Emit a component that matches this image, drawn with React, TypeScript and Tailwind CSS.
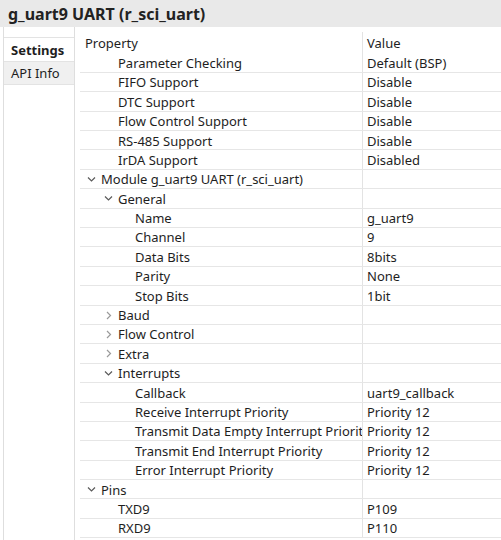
import React from 'react';

type Row = {
  label: string;
  value?: string;
  level: number;
  expander?: 'open' | 'closed';
};

const rows: Row[] = [
  { label: 'Parameter Checking', value: 'Default (BSP)', level: 1 },
  { label: 'FIFO Support', value: 'Disable', level: 1 },
  { label: 'DTC Support', value: 'Disable', level: 1 },
  { label: 'Flow Control Support', value: 'Disable', level: 1 },
  { label: 'RS-485 Support', value: 'Disable', level: 1 },
  { label: 'IrDA Support', value: 'Disabled', level: 1 },
  { label: 'Module g_uart9 UART (r_sci_uart)', level: 0, expander: 'open' },
  { label: 'General', level: 1, expander: 'open' },
  { label: 'Name', value: 'g_uart9', level: 2 },
  { label: 'Channel', value: '9', level: 2 },
  { label: 'Data Bits', value: '8bits', level: 2 },
  { label: 'Parity', value: 'None', level: 2 },
  { label: 'Stop Bits', value: '1bit', level: 2 },
  { label: 'Baud', level: 1, expander: 'closed' },
  { label: 'Flow Control', level: 1, expander: 'closed' },
  { label: 'Extra', level: 1, expander: 'closed' },
  { label: 'Interrupts', level: 1, expander: 'open' },
  { label: 'Callback', value: 'uart9_callback', level: 2 },
  { label: 'Receive Interrupt Priority', value: 'Priority 12', level: 2 },
  { label: 'Transmit Data Empty Interrupt Priority', value: 'Priority 12', level: 2 },
  { label: 'Transmit End Interrupt Priority', value: 'Priority 12', level: 2 },
  { label: 'Error Interrupt Priority', value: 'Priority 12', level: 2 },
  { label: 'Pins', level: 0, expander: 'open' },
  { label: 'TXD9', value: 'P109', level: 1 },
  { label: 'RXD9', value: 'P110', level: 1 },
];

const indent = ['pl-[21px]', 'pl-[38px]', 'pl-[55px]'];

function Chevron({ open }: { open: boolean }) {
  return (
    <svg width="9" height="9" viewBox="0 0 9 9" className="absolute left-[-14px] top-[5px]">
      {open ? (
        <polyline points="1,2.5 4.5,6 8,2.5" fill="none" stroke="#5a5a5a" strokeWidth="1.2" />
      ) : (
        <polyline points="3,1 6.5,4.5 3,8" fill="none" stroke="#9a9a9a" strokeWidth="1.2" />
      )}
    </svg>
  );
}

export default function App() {
  return (
    <div
      className="w-[501px] h-[540px] overflow-hidden bg-white text-[#1e1e1e] flex flex-col"
      style={{ fontFamily: '"Noto Sans", "Open Sans", sans-serif' }}
    >
      {/* Title */}
      <div className="h-[27px] shrink-0 bg-[#e9e9e9] pl-[8px] flex items-center text-[16px] font-bold text-[#222]">
        g_uart9 UART (r_sci_uart)
      </div>

      <div className="flex flex-1 min-h-0">
        {/* Tabs */}
        <div className="ml-[3px] w-[72px] shrink-0 border-l border-r border-[#dedede] pt-[10px]">
          <div className="h-[24px] border-t border-[#e3e3e3] bg-white pl-[7px] pt-[2px] flex items-center text-[13px] font-bold">
            Settings
          </div>
          <div className="h-[24px] border-t border-b border-[#e3e3e3] bg-[#f0f0f0] pl-[7px] pt-[2px] flex items-center text-[13px]">
            API Info
          </div>
        </div>

        {/* Property table */}
        <div className="ml-[5px] flex-1 pt-[5px] text-[13px]">
          <div className="flex h-[21.5px]">
            <div className="w-[282px] shrink-0 pl-[5px] pt-[2px] flex items-center">Property</div>
            <div className="flex-1 border-l border-[#e3e3e3] pl-[4px] pt-[2px] flex items-center">Value</div>
          </div>
          {rows.map((r, i) => (
            <div key={i} className="flex h-[19.4px] border-b border-[#e6e6e6] box-border">
              <div className={`w-[282px] shrink-0 overflow-hidden whitespace-nowrap ${indent[r.level]}`}>
                <div className="relative h-full pt-[2px] flex items-center">
                  {r.expander && <Chevron open={r.expander === 'open'} />}
                  <span>{r.label}</span>
                </div>
              </div>
              <div className="flex-1 border-l border-[#e3e3e3] pl-[4px] pt-[2px] flex items-center whitespace-nowrap">
                {r.value}
              </div>
            </div>
          ))}
        </div>
      </div>
    </div>
  );
}
